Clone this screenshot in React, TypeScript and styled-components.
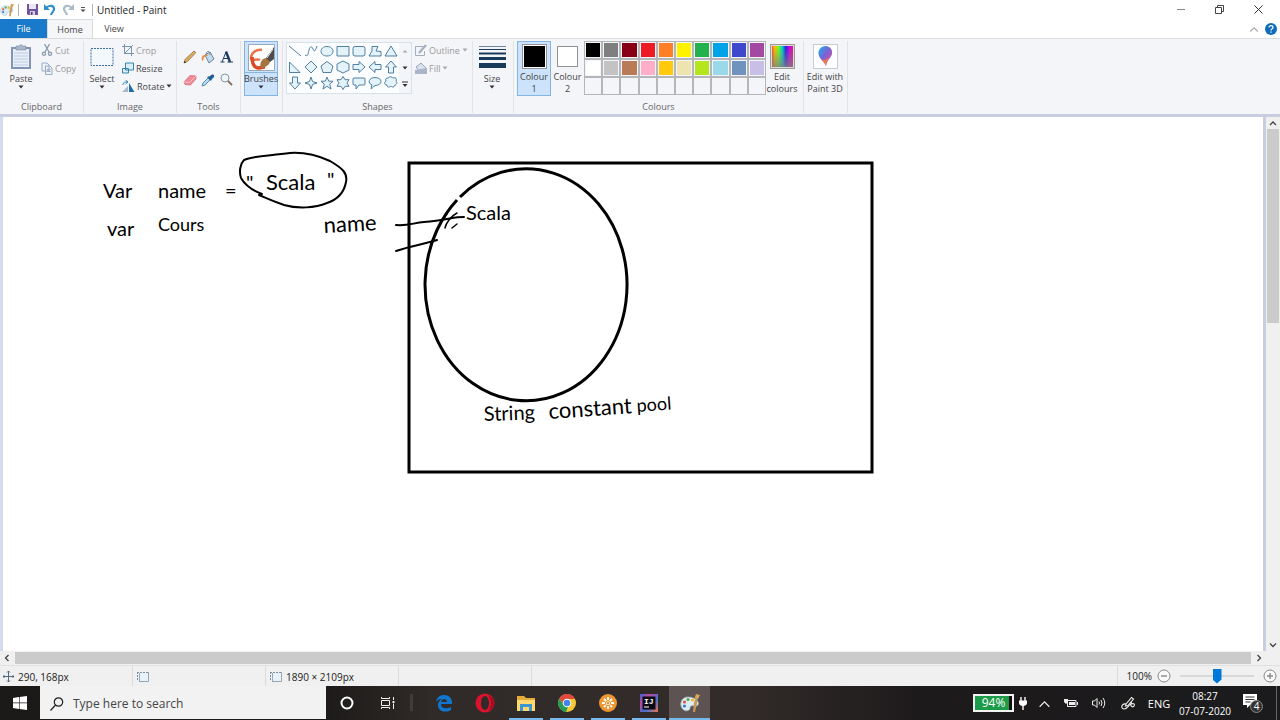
import React from "react";
import styled, { createGlobalStyle, css } from "styled-components";

const GlobalStyle = createGlobalStyle`
  *, *::before, *::after { box-sizing: border-box; }
  body { margin: 0; overflow: hidden; }
  body, button, input { font-family: "Segoe UI", "Open Sans", "Noto Sans", sans-serif; }
  button { border: 0; padding: 0; margin: 0; background: none; color: inherit; font-size: inherit; }
  svg { display: block; flex: none; }
`;

const Window = styled.div`
  min-height: 100vh;
  display: flex;
  flex-direction: column;
  background: #fff;
  color: #444;
  font-size: 9px;
  line-height: 12px;
`;

/* ---------- title bar ---------- */
const TitleBar = styled.header`
  display: flex;
  align-items: center;
  height: 19px;
  padding-right: 2px;
`;
const QuickAccess = styled.div`
  display: flex;
  align-items: center;
`;
const QuickButton = styled.button<{ $w?: number }>`
  width: ${(p) => p.$w ?? 18}px;
  height: 18px;
  display: grid;
  place-items: center;
`;
const ThinRule = styled.span`
  width: 1px;
  height: 12px;
  margin: 0 4px;
  background: #b4b4b4;
`;
const Title = styled.h1`
  flex: 1;
  margin: 0;
  font-size: 10px;
  font-weight: 400;
  color: #222;
`;
const CaptionButton = styled.button`
  width: 39px;
  height: 19px;
  display: grid;
  place-items: center;
  color: #333;
`;

/* ---------- tabs ---------- */
const TabRow = styled.nav`
  display: flex;
  height: 19px;
  align-items: stretch;
`;
const Tab = styled.button<{ $kind?: "file" | "active" }>`
  width: 42px;
  color: #444;
  ${(p) =>
    p.$kind === "file" &&
    css`
      width: 47px;
      background: #1979ca;
      color: #fff;
    `}
  ${(p) =>
    p.$kind === "active" &&
    css`
      width: 46px;
      background: #f5f6f7;
      border: 1px solid #dadbdc;
      border-bottom: 0;
    `}
`;
const TabEnd = styled.div`
  flex: 1;
  display: flex;
  justify-content: flex-end;
  align-items: center;
  gap: 6px;
  padding-right: 3px;
`;

/* ---------- ribbon ---------- */
const Ribbon = styled.section`
  display: flex;
  height: 76px;
  padding: 2px 0 1px;
  background: #f4f5f9;
  border-top: 1px solid #dadbdc;
`;
const GroupBox = styled.div<{ $w: number }>`
  width: ${(p) => p.$w}px;
  display: flex;
  flex-direction: column;
  border-right: 1px solid #e2e3e7;
`;
const GroupBody = styled.div<{ $pad?: number; $gap?: number }>`
  height: 56px;
  display: flex;
  align-items: flex-start;
  gap: ${(p) => p.$gap ?? 0}px;
  padding-left: ${(p) => p.$pad ?? 0}px;
`;
const GroupLabel = styled.div`
  padding-top: 4px;
  text-align: center;
  color: #666;
`;
const BigButton = styled.button<{ $on?: boolean; $w?: number }>`
  width: ${(p) => p.$w ?? 34}px;
  height: 55px;
  display: flex;
  flex-direction: column;
  align-items: center;
  line-height: 12px;
  border: 1px solid ${(p) => (p.$on ? "#86b5e2" : "transparent")};
  background: ${(p) => (p.$on ? "#cce3fb" : "transparent")};
`;
const BigIcon = styled.span<{ $line?: boolean }>`
  height: 31px;
  align-self: stretch;
  display: grid;
  place-items: center;
  border-bottom: 1px solid ${(p) => (p.$line ? "#86b5e2" : "transparent")};
`;
const Rows = styled.div`
  display: flex;
  flex-direction: column;
`;
const RowButton = styled.button<{ $dim?: boolean }>`
  height: 18px;
  display: flex;
  align-items: center;
  gap: 2px;
  white-space: nowrap;
  color: ${(p) => (p.$dim ? "#9a9a9a" : "#444")};
`;
const ToolGrid = styled.div`
  display: grid;
  grid-template-columns: repeat(3, 18px);
  grid-auto-rows: 23px;
  padding-top: 4px;
`;
const ToolButton = styled.button`
  display: grid;
  place-items: center;
`;
const Gallery = styled.div`
  display: flex;
  width: 126px;
  height: 52px;
  margin-top: 1px;
  border: 1px solid #d8e0e8;
  background: #fbfdff;
`;
const ShapeGrid = styled.div`
  flex: 1;
  display: grid;
  grid-template-columns: repeat(7, 16px);
  grid-auto-rows: 16px;
`;
const GallerySteps = styled.div`
  width: 12px;
  display: grid;
  grid-template-rows: repeat(3, 1fr);
  background: #f4f5f9;
`;
const Chip = styled.span<{ $c: string; $s: number }>`
  width: ${(p) => p.$s}px;
  height: ${(p) => p.$s}px;
  border: 1px solid #8f9299;
  box-shadow: inset 0 0 0 1px #fff;
  background: ${(p) => p.$c};
`;
const Palette = styled.div`
  display: grid;
  grid-template-columns: repeat(10, 1fr);
  grid-auto-rows: 18px;
  width: 182px;
`;
const Swatch = styled.button<{ $c: string }>`
  height: 18px;
  border: 1px solid #b4b6ba;
  background: ${(p) => p.$c};
  box-shadow: inset 0 0 0 1px #f4f5f9;
`;
const Spectrum = styled.span`
  width: 25px;
  height: 25px;
  border: 1px solid #a09a94;
  box-shadow: inset 0 0 0 1px #ddd;
  background: linear-gradient(to bottom, rgba(128, 128, 128, 0) 10%, rgba(128, 128, 128, 0.85)),
    linear-gradient(to right, #e33, #fb0 16%, #6f2 34%, #0cc 50%, #22d 64%, #c0e 80%, #e24);
`;
const Framed = styled.span`
  width: 25px;
  height: 25px;
  display: grid;
  place-items: center;
  border: 1px solid #c9cbd0;
  background: #fff;
`;

/* ---------- work area ---------- */
const WorkArea = styled.main`
  flex: 1;
  display: flex;
  min-height: 0;
  border-top: 3px solid #c8cedf;
`;
const Sheet = styled.div`
  flex: 1;
  min-width: 0;
  display: flex;
  overflow: hidden;
  border-left: 3px solid #d3dced;
  border-right: 3px solid #c8cedf;
  background: #fff;
`;
const Bar = styled.div<{ $vertical?: boolean }>`
  display: flex;
  flex-direction: ${(p) => (p.$vertical ? "column" : "row")};
  ${(p) => (p.$vertical ? "width: 14px;" : "height: 14px; padding: 1px 14px 1px 0;")}
  background: #f0f0f0;
`;
const BarButton = styled.button`
  width: 14px;
  height: 12px;
  flex: none;
  display: grid;
  place-items: center;
`;
const Track = styled.div<{ $vertical?: boolean }>`
  flex: 1;
  display: flex;
  flex-direction: ${(p) => (p.$vertical ? "column" : "row")};
`;
const Thumb = styled.div<{ $size: string }>`
  flex: 0 0 ${(p) => p.$size};
  margin: 0 1px;
  background: #cbcbcb;
`;

/* ---------- status bar ---------- */
const StatusBar = styled.footer`
  display: flex;
  height: 21px;
  background: #f0f0f0;
  border-top: 1px solid #e0e0e0;
  font-size: 10px;
  color: #222;
`;
const StatusCell = styled.div<{ $grow?: boolean }>`
  ${(p) => (p.$grow ? "flex: 1;" : "width: 133px;")}
  display: flex;
  align-items: center;
  gap: 4px;
  padding: 1px 0 0 3px;
  border-right: 1px solid #dcdcdc;
`;
const ZoomBox = styled.div`
  width: 162px;
  display: flex;
  align-items: center;
  justify-content: flex-end;
  gap: 5px;
  padding-right: 3px;
`;
const Slider = styled.input`
  appearance: none;
  width: 74px;
  height: 16px;
  margin: 0 4px;
  background: linear-gradient(#d8d8d8, #d8d8d8) center / 100% 2px no-repeat;
  &::-webkit-slider-thumb {
    appearance: none;
    width: 9px;
    height: 15px;
    background: #0078d7;
    clip-path: polygon(0 0, 100% 0, 100% 74%, 50% 100%, 0 74%);
  }
`;

/* ---------- taskbar ---------- */
const Taskbar = styled.div`
  display: flex;
  height: 34px;
  background: linear-gradient(to right, #1c1a19 0 25%, #302b29 34%, #322b2a 58%, #1d1a1b 72%, #1b1b1d);
  color: #fff;
`;
const StartButton = styled.button`
  width: 40px;
  display: grid;
  place-items: center;
`;
const SearchLabel = styled.label`
  width: 286px;
  margin-bottom: 1px;
  display: flex;
  align-items: center;
  gap: 9px;
  padding: 2px 0 0 10px;
  background: #f2f2f2;
  color: #333;
`;
const SearchInput = styled.input`
  flex: 1;
  min-width: 0;
  border: 0;
  padding: 0;
  background: none;
  font-size: 12px;
  &::placeholder { color: #444; opacity: 1; }
`;
const Task = styled.button<{ $open?: boolean; $active?: boolean }>`
  width: 41px;
  display: grid;
  place-items: center;
  background: ${(p) => (p.$active ? "#5d5352" : "transparent")};
  background-image: ${(p) => (p.$open ? "linear-gradient(#76b9ed, #76b9ed)" : "none")};
  background-repeat: no-repeat;
  background-position: center bottom;
  background-size: ${(p) => (p.$active ? "41px" : "34px")} 2px;
`;
const TaskRule = styled.span`
  width: 3px;
  height: 17px;
  margin: 8px 10px 0 2px;
  background: #423b39;
`;
const Tray = styled.div`
  flex: 1;
  display: flex;
  justify-content: flex-end;
  font-size: 11px;
`;
const TrayItem = styled.button<{ $w: number }>`
  width: ${(p) => p.$w}px;
  display: grid;
  place-items: center;
`;
const BatteryBadge = styled.span`
  width: 41px;
  height: 18px;
  border: 2px solid #f2f2f2;
  background: linear-gradient(to right, #1d9b48 0 92%, #111 92%);
  font-size: 12px;
  line-height: 14px;
  text-align: center;
`;
const Clock = styled.div`
  width: 58px;
  display: flex;
  flex-direction: column;
  justify-content: center;
  padding-top: 1px;
  text-align: center;
  font-size: 10px;
  line-height: 15px;
`;
const ShowDesktop = styled.button`
  width: 4px;
  margin-left: 4px;
  border-left: 1px solid #666;
`;

const Arrow = ({ c = "#333", up = false }: { c?: string; up?: boolean }) => (
  <svg width="6" height="4" viewBox="0 0 6 4">
    <path d={up ? "M0.5 3.5h5L3 1z" : "M0.5 0.5h5L3 3.5z"} fill={c} />
  </svg>
);

const Chevron = ({ dir, c = "#444", s = 8, w = 1.3 }: { dir: "up" | "down" | "left" | "right"; c?: string; s?: number; w?: number }) => {
  const d = { up: "M1 6l3-3 3 3", down: "M1 2.500l3 3 3-3", left: "M5.500 1l-3 3 3 3", right: "M2.500 1l3 3-3 3" }[dir];
  return (
    <svg width={s} height={s} viewBox="0 0 8 8" fill="none" stroke={c} strokeWidth={w}>
      <path d={d} />
    </svg>
  );
};

const PaletteIcon = ({ s = 14 }: { s?: number }) => (
  <svg width={s} height={s} viewBox="0 0 20 20">
    <path d="M8 4C3 4 0 8 1 13c1 4 5 6 8 4 2-1 0-3 2-4 2-1 5 1 7-1 2-4-4-8-10-8z" fill="#dcecf4" stroke="#9db4c3" strokeWidth=".7" />
    <circle cx="4.500" cy="9" r="1.600" fill="#e0523c" />
    <circle cx="8" cy="6.500" r="1.600" fill="#51a84c" />
    <circle cx="12.500" cy="7" r="1.600" fill="#efb83a" />
    <circle cx="4.500" cy="13" r="1.600" fill="#3a7fd0" />
    <path d="M13 19l1-9 1.500-5 2 .5-.5 5-2 8.500z" fill="#c99657" />
    <path d="M14.500 5.500L16 1l4 1-2 4z" fill="#d7a55c" />
  </svg>
);

const SizeFrame = () => (
  <svg width="13" height="12" viewBox="0 0 13 12" fill="none">
    <path d="M3 2h8v7H3z" fill="#e8f2fb" />
    <path d="M1 1.500h11M1.500 1v9" stroke="#7d8fa3" strokeDasharray="2 1" />
    <path d="M3.500 2v8M3 10.500h9.500V1" stroke="#96a7b8" />
  </svg>
);

const shapes: [string, string][] = [
  ["Line", "M2 3l12 10"],
  ["Curve", "M2 12c3 2 3-1 4-5s3-4 4-1 2 3 4-3"],
  ["Oval", "M8 3.500c8 0 8 9.500 0 9.500s-8-9.500 0-9.500z"],
  ["Rectangle", "M2 3.500h12v9.500h-12z"],
  ["Rounded rectangle", "M4 3.500h8q2 0 2 2v5.500q0 2-2 2H4q-2 0-2-2V5.500q0-2 2-2z"],
  ["Polygon", "M2 13L5 8V3.500h6L9 8l5 .5V13z"],
  ["Triangle", "M8 3l6 10H2z"],
  ["Right triangle", "M2.500 3v10.500H13z"],
  ["Diamond", "M8 2l6 6-6 6-6-6z"],
  ["Pentagon", "M8 2.500l6 4.500-2 6.500H4L2 7z"],
  ["Hexagon", "M8 2l6 3v6l-6 3-6-3V5z"],
  ["Right arrow", "M2 5.500h6v-3L14 8l-6 5.500v-3H2z"],
  ["Left arrow", "M14 5.500H8v-3L2 8l6 5.500v-3h6z"],
  ["Up arrow", "M5.500 14V8h-3L8 2l5.500 6h-3v6z"],
  ["Down arrow", "M5.500 2v6h-3L8 14l5.500-6h-3V2z"],
  ["Four-point star", "M8 2l1.500 4.500L14 8 9.500 9.500 8 14 6.500 9.500 2 8l4.500-1.500z"],
  ["Five-point star", "M8 2l1.700 4.200H14l-3.300 3L12 14l-4-2.700L4 14l1.300-4.800L2 6.200h4.300z"],
  ["Six-point star", "M8 1.500l2 3.200h4L12 8l2 3.300h-4L8 14.500l-2-3.200H2L4 8 2 4.700h4z"],
  ["Rounded callout", "M3 3h10q1 0 1 1v5q0 1-1 1H8l-3 4v-4H3q-1 0-1-1V4q0-1 1-1z"],
  ["Oval callout", "M8 2.500c8 0 8 8 0 8-1 0-2 3-4 3l1-3.500C0 8 2 2.500 8 2.500z"],
  ["Cloud callout", "M5 3c2-2 4-1 5 0 3-1 4 1 3 3 2 2 0 4-1 4-1 3-3 2-4 1-2 2-4 1-4-1-3 0-3-3-1-4-1-2 0-3 2-3z"],
];

const palette = [
  ["Black", "#000000"], ["Grey", "#7f7f7f"], ["Dark red", "#880015"], ["Red", "#ed1c24"], ["Orange", "#ff7f27"],
  ["Yellow", "#fff200"], ["Green", "#22b14c"], ["Turquoise", "#00a2e8"], ["Indigo", "#3f48cc"], ["Purple", "#a349a4"],
  ["White", "#ffffff"], ["Light grey", "#c3c3c3"], ["Brown", "#b97a57"], ["Rose", "#ffaec9"], ["Gold", "#ffc90e"],
  ["Light yellow", "#efe4b0"], ["Lime", "#b5e61d"], ["Light turquoise", "#99d9ea"], ["Blue grey", "#7092be"], ["Lavender", "#c8bfe7"],
  ...Array.from({ length: 10 }, (_, i) => [`Custom ${i + 1}`, "#f4f5f9"]),
];

const Group = ({ w, label, pad, gap, children }: { w: number; label?: string; pad?: number; gap?: number; children: React.ReactNode }) => (
  <GroupBox $w={w}>
    <GroupBody $pad={pad} $gap={gap}>{children}</GroupBody>
    {label && <GroupLabel>{label}</GroupLabel>}
  </GroupBox>
);

const Word = styled.text`
  font-family: "Ink Free", "Segoe Print", Lato, sans-serif;
  fill: #000;
`;

const Drawing = () => (
  <svg width="1260" height="534" viewBox="3 117 1260 534" fill="none" stroke="#000" strokeLinecap="round" strokeLinejoin="round">
    <rect x="409" y="163" width="463" height="309" strokeWidth="3" strokeLinejoin="miter" />
    <path d="M460 197A101 116 0 1 1 437 230Q445 213 457 200" strokeWidth="3" strokeLinecap="butt" />
    <path d="M241 178c-2-6-1-14 3-18 8-4 23-4 46-7 16-1 29 3 40 8 12 7 18 12 16 21-2 11-10 18-19 21-12 5-29 6-43 2-12-4-18-7-25-10l3-1c-8-3-17-9-21-16z" strokeWidth="2" />
    <g strokeWidth="2">
      <path d="M396 225c12 1 17-2 28-3 12-1 17-2 28-4 5-1 8-1 12-1" />
      <path d="M396 251c14-5 29-7 41-11" />
      <path d="M445 228c1-5 6-12 12-15M439 227c3-7 5-9 8-13M452 228l5-4" strokeWidth="1.500" />
    </g>
    <g stroke="none">
      <Word x="103" y="198" fontSize="20">Var</Word>
      <Word x="158" y="198" fontSize="20">name</Word>
      <Word x="225" y="198" fontSize="20">=</Word>
      <Word x="246" y="190" fontSize="20">"</Word>
      <Word x="266" y="190" fontSize="22">Scala</Word>
      <Word x="327" y="187" fontSize="20">"</Word>
      <Word x="107" y="236" fontSize="20">var</Word>
      <Word x="158" y="231" fontSize="18">Cours</Word>
      <Word x="324" y="233" fontSize="22" transform="rotate(-3 324 233)">name</Word>
      <Word x="466" y="220" fontSize="20">Scala</Word>
      <Word x="484" y="421" fontSize="20" transform="rotate(-2 484 421)">String</Word>
      <Word x="549" y="419" fontSize="22" transform="rotate(-4 549 419)">constant</Word>
      <Word x="637" y="412" fontSize="18" transform="rotate(-4 637 412)">pool</Word>
    </g>
  </svg>
);

export default function App() {
  return (
    <Window>
      <GlobalStyle />
      <TitleBar>
        <QuickAccess>
          <PaletteIcon />
          <ThinRule />
          <QuickButton aria-label="Save">
            <svg width="11" height="11" viewBox="0 0 11 11"><path d="M0 0h11v11H1L0 10z" fill="#70559c" /><path d="M2 0h7v5H2z" fill="#e9e6f2" /><path d="M3 7h5v4H3z" fill="#cfc8df" /><path d="M4 8h1.500v3H4z" fill="#55407d" /></svg>
          </QuickButton>
          <QuickButton aria-label="Undo">
            <svg width="12" height="13" viewBox="0 0 12 13"><path d="M0 1v6h6z" fill="#2f91c8" /><path d="M2 5c4-4 8-2 8 1 0 3-3 4-3 6" fill="none" stroke="#2f91c8" strokeWidth="2.200" /></svg>
          </QuickButton>
          <QuickButton aria-label="Redo">
            <svg width="12" height="13" viewBox="0 0 12 13"><path d="M12 1v6H6z" fill="#a9bccb" /><path d="M10 5C6 1 2 3 2 6c0 3 3 4 3 6" fill="none" stroke="#a9bccb" strokeWidth="2.200" /></svg>
          </QuickButton>
          <QuickButton $w={11} aria-label="Customise quick access"><svg width="6" height="6" viewBox="0 0 6 6"><path d="M1 .5h4" stroke="#555" /><path d="M.5 2.500h5L3 5z" fill="#444" /></svg></QuickButton>
          <ThinRule />
        </QuickAccess>
        <Title>Untitled - Paint</Title>
        <CaptionButton aria-label="Minimise"><svg width="8" height="8"><path d="M0 3.500h8" stroke="#888" /></svg></CaptionButton>
        <CaptionButton aria-label="Restore"><svg width="9" height="9" viewBox="0 0 9 9" fill="none" stroke="#444"><path d="M.5 2.500h6v6h-6zM2.500 2.500v-2h6v6h-2" /></svg></CaptionButton>
        <CaptionButton aria-label="Close"><svg width="9" height="9" viewBox="0 0 9 9" stroke="#333"><path d="M.5.5l8 8M8.500.5l-8 8" /></svg></CaptionButton>
      </TitleBar>

      <TabRow>
        <Tab $kind="file">File</Tab>
        <Tab $kind="active">Home</Tab>
        <Tab>View</Tab>
        <TabEnd>
          <button aria-label="Collapse ribbon"><Chevron dir="up" c="#aaa" s={10} w={0.9} /></button>
          <button aria-label="Help">
            <svg width="12" height="12" viewBox="0 0 12 12"><circle cx="6" cy="6" r="6" fill="#0f6cbd" /><path d="M4 4.500c0-2.500 4-2.500 4 0C8 6 6 5.500 6 7.500" fill="none" stroke="#fff" strokeWidth="1.200" /><path d="M5.400 8.500h1.200v1.200H5.400z" fill="#fff" /></svg>
          </button>
        </TabEnd>
      </TabRow>

      <Ribbon>
        <Group w={84} label="Clipboard" pad={4} gap={3}>
          <BigButton>
            <BigIcon><svg width="22" height="26" viewBox="0 0 22 26"><path d="M1 3h20v22H1z" fill="#8295b4" /><path d="M3 5h16v18H3z" fill="#e9eff8" /><path d="M4 9h14M4 12h14M4 15h14M4 18h14M4 21h14" stroke="#bccbe0" /><path d="M6 2h3l2-1.500L13 2h3v4H6z" fill="#a9b6c9" stroke="#7e8da5" strokeWidth=".6" /></svg></BigIcon>
            Paste<Arrow />
          </BigButton>
          <Rows>
            <RowButton $dim><svg width="12" height="12" viewBox="0 0 12 12" fill="none" stroke="#8a9bb0" strokeWidth="1.300"><path d="M3.500 0L8 8M8.500 0L4 8" /><circle cx="3" cy="9.700" r="1.600" /><circle cx="9" cy="9.700" r="1.600" /></svg>Cut</RowButton>
            <RowButton $dim><svg width="12" height="13" viewBox="0 0 12 13" fill="#edf2f8" stroke="#9aabc2"><path d="M1 1h5l2 2v6H1zM4.500 4h4.500l2 2v6.500H4.500z" /><path d="M6 7.500h3.500M6 9.500h3.500" /></svg>Copy</RowButton>
          </Rows>
        </Group>

        <Group w={93} label="Image" pad={1} gap={3}>
          <BigButton>
            <BigIcon><svg width="24" height="20" viewBox="0 0 24 20"><path d="M1 1.500h22v17H1z" fill="#f3f8fd" stroke="#3d6ea0" strokeDasharray="2 1" /></svg></BigIcon>
            Select<Arrow />
          </BigButton>
          <Rows>
            <RowButton $dim><svg width="12" height="12" viewBox="0 0 12 12" fill="none" stroke="#7893ad"><path d="M2.500 0v9.500H12M0 2.500h9.500V12M2.500 9.500L11 1" /></svg>Crop</RowButton>
            <RowButton><svg width="12" height="12" viewBox="0 0 12 12" fill="#dceefa" stroke="#3583ad"><path d="M3.500 1h8v7h-8zM.5 6.500h6V11h-6z" /></svg>Resize</RowButton>
            <RowButton><svg width="13" height="13" viewBox="0 0 13 13"><path d="M0 12l6-6v6z" fill="#a9b9c8" /><path d="M7 12V3l5.500 9z" fill="#226ba5" /><path d="M1 5c0-3 2-3 4-3M3.500 0L6 2 3.500 4" fill="none" stroke="#3583ad" /></svg>Rotate<Arrow /></RowButton>
          </Rows>
        </Group>

        <Group w={64} label="Tools" pad={4}>
          <ToolGrid>
            <ToolButton aria-label="Pencil"><svg width="14" height="14" viewBox="0 0 14 14"><path d="M1 13l1-3.500L11 1l1.800 1.600L4.500 11.500z" fill="#deb05e" stroke="#8d6b3a" strokeWidth=".8" /><path d="M1 13l.5-2L3 12.500z" fill="#222" /></svg></ToolButton>
            <ToolButton aria-label="Fill"><svg width="14" height="14" viewBox="0 0 14 14"><path d="M4 5l5-3 4 7-5 4z" fill="#c4dcf0" stroke="#6b8298" /><path d="M5 6C5 0 9 0 9 5" fill="none" stroke="#738699" /><path d="M4 5l4 0-5 2-1 4c-2-1-2-6 2-6z" fill="#ed873c" /></svg></ToolButton>
            <ToolButton aria-label="Text"><svg width="13" height="13" viewBox="0 0 13 13" fill="none" stroke="#203c64"><path d="M2 12L6 2" /><path d="M6 1.500l4 10.500" strokeWidth="2.400" /><path d="M3.500 8.500h5M.5 12h4M7.500 12H13" /></svg></ToolButton>
            <ToolButton aria-label="Eraser"><svg width="14" height="12" viewBox="0 0 14 12"><path d="M1 8L7 1.500l6 .5v3L7.500 11 2 10.500z" fill="#ef8b96" stroke="#d46f7d" strokeWidth=".8" /><path d="M1 8l5.500.5L13 2" fill="none" stroke="#fac0c4" /></svg></ToolButton>
            <ToolButton aria-label="Colour picker"><svg width="14" height="14" viewBox="0 0 14 14"><path d="M1 13l1-3 5-5 2 2-5 5z" fill="#b8daf0" stroke="#3b74a0" strokeWidth=".8" /><path d="M6 4l4 4 1-2c4-2 2-7-2-3z" fill="#235f94" /></svg></ToolButton>
            <ToolButton aria-label="Magnifier"><svg width="13" height="13" viewBox="0 0 13 13"><circle cx="5" cy="5" r="4" fill="#edf5fb" stroke="#8997a5" /><path d="M8 8l4 4" stroke="#876b55" strokeWidth="1.800" /></svg></ToolButton>
          </ToolGrid>
        </Group>

        <Group w={42} pad={3}>
          <BigButton $on>
            <BigIcon $line><svg width="27" height="27" viewBox="0 0 27 27"><path d="M.5.5h26v26H.5z" fill="#fff" stroke="#9ba8b8" /><path d="M14 6C8 5 3 9 3 14c0 4 6 0 9 2" fill="none" stroke="#e8764a" strokeWidth="2.500" /><path d="M4 13c0 6 1 10 6 11 2 0 5-1 7-1" fill="none" stroke="#dd4a24" strokeWidth="3.500" /><path d="M13 24c-2-5 1-10 6-10 3 1 4 5 1 7-2 2-5 3-7 3z" fill="#a5743f" /><path d="M18 14l8-11v12l-4 3z" fill="#4c4c4e" /><path d="M19 14l6-9" stroke="#eee" /></svg></BigIcon>
            Brushes<Arrow />
          </BigButton>
        </Group>

        <Group w={190} label="Shapes" pad={3} gap={3}>
          <Gallery>
            <ShapeGrid>
              {shapes.map(([name, d]) => (
                <ToolButton key={name} aria-label={name}>
                  <svg width="16" height="16" viewBox="0 0 16 16"><path d={d} fill={name === "Line" || name === "Curve" ? "none" : "#e4f3fa"} stroke="#3f7296" strokeWidth=".9" /></svg>
                </ToolButton>
              ))}
            </ShapeGrid>
            <GallerySteps>
              <ToolButton aria-label="Previous shapes"><Arrow c="#aaa" up /></ToolButton>
              <ToolButton aria-label="Next shapes"><Arrow /></ToolButton>
              <ToolButton aria-label="All shapes"><svg width="6" height="7" viewBox="0 0 6 7"><path d="M0 1h6" stroke="#333" /><path d="M.5 3h5L3 6z" fill="#333" /></svg></ToolButton>
            </GallerySteps>
          </Gallery>
          <Rows>
            <RowButton $dim><svg width="12" height="12" viewBox="0 0 12 12" fill="none" stroke="#a5afbb"><path d="M.5 2.500h8M.5 2.500v9h9V7" /><path d="M4 9l7-8" strokeWidth="2" /></svg>Outline<Arrow c="#aaa" /></RowButton>
            <RowButton $dim><svg width="12" height="12" viewBox="0 0 12 12"><path d="M1 5l5-4 5 5-5 5z" fill="#dbe2ec" stroke="#99a7b9" /><path d="M0 8l6-1 6-1v6H0z" fill="#aab6c8" /></svg>Fill<Arrow c="#aaa" /></RowButton>
          </Rows>
        </Group>

        <Group w={41} pad={2}>
          <BigButton>
            <BigIcon><svg width="27" height="22" viewBox="0 0 27 22" stroke="#183b5c"><path d="M0 .5h27" stroke="#70869a" /><path d="M0 3.500h27" strokeWidth="1" /><path d="M0 7.500h27" strokeWidth="2" /><path d="M0 12.500h27" strokeWidth="3" /><path d="M0 19.500h27" strokeWidth="5" /></svg></BigIcon>
            Size<Arrow />
          </BigButton>
        </Group>

        <Group w={290} label="Colours" pad={3}>
          <BigButton $on><BigIcon><Chip $c="#000" $s={25} /></BigIcon>Colour<br />1</BigButton>
          <BigButton $w={33}><BigIcon><Chip $c="#fff" $s={21} /></BigIcon>Colour<br />2</BigButton>
          <Palette>
            {palette.map(([name, c]) => <Swatch key={name} $c={c} aria-label={name} />)}
          </Palette>
          <BigButton $w={32}><BigIcon><Spectrum /></BigIcon>Edit<br />colours</BigButton>
        </Group>

        <Group w={44} pad={1}>
          <BigButton $w={40}>
            <BigIcon>
              <Framed>
                <svg width="15" height="21" viewBox="0 0 15 21"><defs><linearGradient id="drop" x1="0" y1="0" x2="1" y2="1"><stop offset="0" stopColor="#17b5e8" /><stop offset=".45" stopColor="#7563d8" /><stop offset="1" stopColor="#f0508b" /></linearGradient></defs><path d="M7.500 0C12 0 15 4 14 8c-1 4-5 6-6 12-1-4-7-7-7.500-12C0 4 3 0 7.500 0z" fill="url(#drop)" /><path d="M3 13c3 2 6 0 8-1-1 2-3 4-3 8-1-3-3-5-5-7z" fill="#ee7a46" /></svg>
              </Framed>
            </BigIcon>
            Edit with<br />Paint 3D
          </BigButton>
        </Group>
      </Ribbon>

      <WorkArea>
        <Sheet><Drawing /></Sheet>
        <Bar $vertical>
          <BarButton aria-label="Scroll up"><Chevron dir="up" /></BarButton>
          <Track $vertical><Thumb $size="38%" /></Track>
          <BarButton aria-label="Scroll down"><Chevron dir="down" /></BarButton>
        </Bar>
      </WorkArea>
      <Bar>
        <BarButton aria-label="Scroll left"><Chevron dir="left" /></BarButton>
        <Track><Thumb $size="99.8%" /></Track>
        <BarButton aria-label="Scroll right"><Chevron dir="right" /></BarButton>
      </Bar>

      <StatusBar>
        <StatusCell>
          <svg width="11" height="11" viewBox="0 0 11 11" fill="none" stroke="#445a70"><path d="M5.500 0v11M0 5.500h11M4 1.500L5.500 0 7 1.500M4 9.500L5.500 11 7 9.500M1.500 4L0 5.500 1.500 7M9.500 4L11 5.500 9.500 7" strokeWidth=".9" /></svg>
          290, 168px
        </StatusCell>
        <StatusCell><SizeFrame /></StatusCell>
        <StatusCell><SizeFrame />1890 × 2109px</StatusCell>
        <StatusCell />
        <StatusCell $grow />
        <ZoomBox>
          <label htmlFor="zoom">100%</label>
          <button aria-label="Zoom out"><svg width="14" height="14" viewBox="0 0 14 14" fill="#fafafa" stroke="#888"><circle cx="7" cy="7" r="6" /><path d="M4 7h6" strokeWidth="1.400" /></svg></button>
          <Slider id="zoom" type="range" min="0" max="100" defaultValue="50" />
          <button aria-label="Zoom in"><svg width="14" height="14" viewBox="0 0 14 14" fill="#fafafa" stroke="#888"><circle cx="7" cy="7" r="6" /><path d="M4 7h6M7 4v6" strokeWidth="1.400" /></svg></button>
        </ZoomBox>
      </StatusBar>

      <Taskbar>
        <StartButton aria-label="Start"><svg width="14" height="14" viewBox="0 0 14 14" fill="#fff"><path d="M0 2l6-.9v5.500H0zM6.600 1L14 0v6.600H6.600zM0 7.300h6v5.600L0 12zM6.600 7.300H14V14l-7.400-1z" /></svg></StartButton>
        <SearchLabel>
          <svg width="14" height="14" viewBox="0 0 14 14" fill="none" stroke="#222" strokeWidth="1.200"><circle cx="8.500" cy="5" r="4.200" /><path d="M5.500 8L.5 13.500" /></svg>
          <SearchInput aria-label="Search" placeholder="Type here to search" />
        </SearchLabel>
        <Task aria-label="Cortana"><svg width="14" height="14" viewBox="0 0 14 14"><circle cx="7" cy="7" r="5.500" fill="none" stroke="#fff" strokeWidth="2" /></svg></Task>
        <Task aria-label="Task view"><svg width="14" height="14" viewBox="0 0 14 14" fill="none" stroke="#eee"><path d="M.5 1v1.500h8V1M.5 4.500h8v5h-8zM.5 13v-1.500h8V13M12.500 1v3M12.500 7.500V13" /><path d="M11.500 5h2v2h-2z" fill="#eee" stroke="none" /></svg></Task>
        <TaskRule />
        <Task aria-label="Edge"><svg width="18" height="18" viewBox="0 0 18 18"><path d="M1 8C2 3 5 1 9 1c5 0 8 3 8 8v1H6c0 5 6 5 10 3v3C11 19 3 18 3 11c0-3 2-5 4-6-3 0-5 1-6 3zM6 8h6c0-4-5-4-6 0z" fill="#0f77d1" /></svg></Task>
        <Task aria-label="Opera"><svg width="20" height="20" viewBox="0 0 20 20"><circle cx="10" cy="10" r="9.500" fill="#d9142c" /><path d="M13 2c9 3 9 13 0 16 4-4 4-12 0-16z" fill="#a30d20" /><ellipse cx="10" cy="10" rx="4" ry="7" fill="#302a29" /></svg></Task>
        <Task $open aria-label="File Explorer"><svg width="20" height="17" viewBox="0 0 20 17"><path d="M1 1h7l2 2h9v13H1z" fill="#e4ad37" /><path d="M1 5h18v11H1z" fill="#ffd96d" /><path d="M4 9h12v7h-3v-4H7v4H4z" fill="#3b96d2" /></svg></Task>
        <Task $open aria-label="Chrome"><svg width="18" height="18" viewBox="0 0 18 18"><circle cx="9" cy="9" r="9" fill="#f6c831" /><path d="M1.200 4.500A9 9 0 0 1 17 5H9L6 11z" fill="#dd4b3e" /><path d="M1.200 4.500L6 11l4 2-2 5C2 17-2 10 1.200 4.500z" fill="#279b55" /><circle cx="9" cy="9" r="4.300" fill="#fff" /><circle cx="9" cy="9" r="3.300" fill="#4285e8" /></svg></Task>
        <Task $open aria-label="Meeting"><svg width="18" height="18" viewBox="0 0 18 18"><circle cx="9" cy="9" r="9" fill="#ee9731" /><path d="M9 3v12M3 9h12M5 5l8 8M13 5l-8 8" stroke="#fff" strokeWidth="1.800" strokeDasharray="3 1 4 1 3" /><circle cx="9" cy="9" r="1.500" fill="#ee9731" /></svg></Task>
        <Task $open aria-label="IntelliJ IDEA"><svg width="18" height="18" viewBox="0 0 18 18"><defs><linearGradient id="ij" x1="0" y1="0" x2="1" y2="1"><stop offset="0" stopColor="#3765d6" /><stop offset=".3" stopColor="#c04a9a" /><stop offset=".6" stopColor="#3f6fd8" /><stop offset="1" stopColor="#ee7444" /></linearGradient></defs><path d="M0 0h18v18H0z" fill="url(#ij)" /><path d="M2.500 2.500h13v13h-13z" fill="#0c0a10" /><text x="4" y="10" fontFamily="Liberation Mono, monospace" fontWeight="700" fontSize="8" fill="#fff">IJ</text><path d="M4 13h5" stroke="#fff" /></svg></Task>
        <Task $open $active aria-label="Paint"><PaletteIcon s={20} /></Task>

        <Tray>
          <TrayItem $w={43}><BatteryBadge>94%</BatteryBadge></TrayItem>
          <TrayItem $w={16} aria-label="Charging"><svg width="8" height="13" viewBox="0 0 8 13"><path d="M2 0v4M6 0v4M4 8v5" stroke="#fff" strokeWidth="1.400" /><path d="M0 3.500h8V6c0 4-8 4-8 0z" fill="#fff" /></svg></TrayItem>
          <TrayItem $w={26} aria-label="Hidden icons"><Chevron dir="up" c="#eee" s={13} w={0.7} /></TrayItem>
          <TrayItem $w={27} aria-label="Power"><svg width="14" height="10" viewBox="0 0 14 10"><path d="M3.500 2.500H12v6H3.500zM13.500 4v3" fill="none" stroke="#eee" /><path d="M5 4h6v3H5zM0 1h4v3l-2 2-2-2z" fill="#eee" /></svg></TrayItem>
          <TrayItem $w={30} aria-label="Volume"><svg width="14" height="12" viewBox="0 0 14 12" fill="none" stroke="#eee"><path d="M.5 4h2L5 1.500v9L2.500 8h-2zM7 4.500q1 1.500 0 3M9 3q2 3 0 6M11 1q3.500 5 0 10" /></svg></TrayItem>
          <TrayItem $w={28} aria-label="Pen"><svg width="14" height="14" viewBox="0 0 14 14" fill="none" stroke="#eee" strokeWidth="1.100"><path d="M5 8l5.500-6.500 2 1.500L7 9.500 4.500 10z" /><path d="M5 8c-4-1-6 4-2 5 4 0 4-4 7-5s4 0 3 2-4 0-3-2 0-2-1-1" /></svg></TrayItem>
          <TrayItem $w={34}>ENG</TrayItem>
          <Clock><span>08:27</span><span>07-07-2020</span></Clock>
          <TrayItem $w={38} aria-label="Notifications: 4"><svg width="20" height="20" viewBox="0 0 20 20"><path d="M0 1h14v11H7l-3 3v-3H0z" fill="#fff" /><path d="M2.500 4h9M2.500 6.500h9M2.500 9h5" stroke="#333" /><circle cx="13.500" cy="13.500" r="6" fill="#333" stroke="#888" /><text x="13.500" y="17" textAnchor="middle" fontFamily="Open Sans, sans-serif" fontSize="10" fill="#fff">4</text></svg></TrayItem>
          <ShowDesktop aria-label="Show desktop" />
        </Tray>
      </Taskbar>
    </Window>
  );
}
